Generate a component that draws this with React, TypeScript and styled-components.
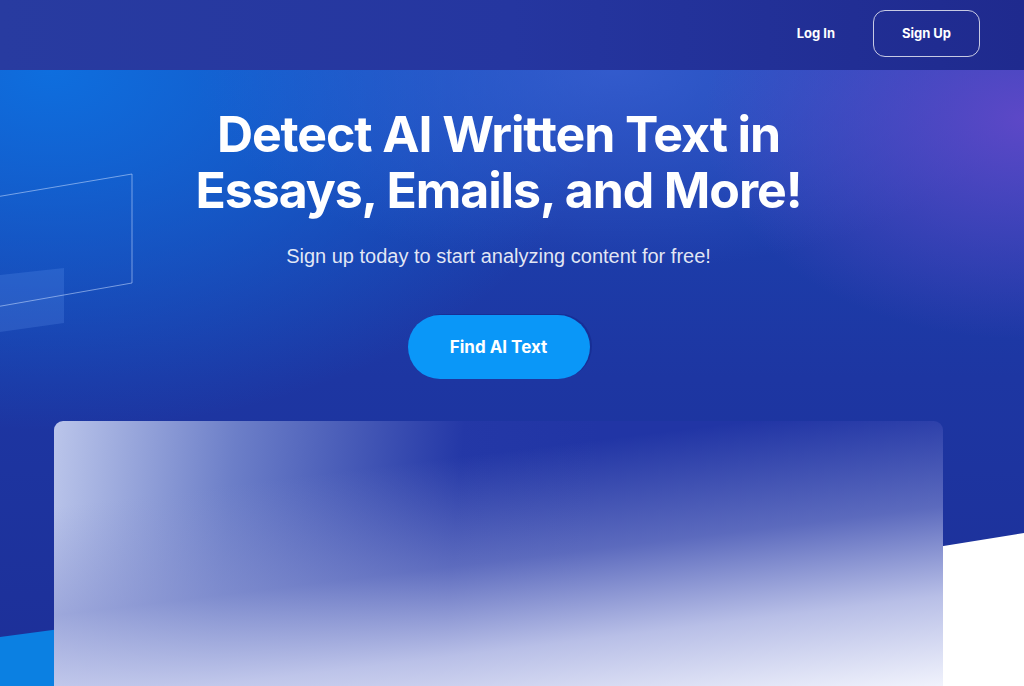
import React from "react";
import styled, { createGlobalStyle } from "styled-components";

const GlobalStyle = createGlobalStyle`
    html, body {
        margin: 0;
        padding: 0;
        background: #1e2a8e;
    }
    * {
        box-sizing: border-box;
    }
`;

const Page = styled.div`
    position: relative;
    width: 100%;
    height: 686px;
    overflow: hidden;
    font-family: "Inter", "Liberation Sans", sans-serif;
    color: #fff;
`;

const Header = styled.header`
    height: 70px;
    display: flex;
    align-items: center;
    justify-content: flex-end;
    gap: 38px;
    padding: 0 44px 4px 0;
    background: linear-gradient(90deg, #283ba0 0%, #2536a0 50%, #1f2a8e 100%);
`;

const NavLink = styled.a`
    cursor: pointer;
    color: #fff;
    font-size: 13px;
    font-weight: 700;
    text-decoration: none;
`;

const NavButton = styled.a`
    cursor: pointer;
    width: 107px;
    height: 47px;
    display: flex;
    align-items: center;
    justify-content: center;
    border: 1.5px solid rgba(255, 255, 255, 0.75);
    border-radius: 12px;
    color: #fff;
    font-size: 13px;
    font-weight: 700;
`;

const Hero = styled.section`
    position: relative;
    height: 616px;
    background:
        radial-gradient(ellipse 320px 220px at 100% 8%, rgba(96, 72, 200, 0.95) 0%, rgba(96, 72, 200, 0) 100%),
        radial-gradient(ellipse 420px 200px at 60% 0%, rgba(60, 100, 215, 0.7) 0%, rgba(60, 100, 215, 0) 100%),
        radial-gradient(ellipse 560px 360px at 5% 0%, rgba(14, 110, 222, 1) 0%, rgba(14, 110, 222, 0) 100%),
        linear-gradient(180deg, #1c45b3 0%, #1d36a2 50%, #1d2f98 100%);
`;

const Content = styled.div`
    position: relative;
    z-index: 2;
    width: 889px;
    margin-left: 54px;
    display: flex;
    flex-direction: column;
    align-items: center;
    padding-top: 36px;
`;

const Title = styled.h1`
    margin: 0;
    font-size: 50px;
    line-height: 56px;
    font-weight: 700;
    letter-spacing: -1.1px;
    text-align: center;
`;

const Subtitle = styled.p`
    margin: 27px 0 0;
    font-family: "Liberation Sans", Arial, sans-serif;
    font-size: 20px;
    color: rgba(255, 255, 255, 0.88);
`;

const Cta = styled.button`
    margin-top: 47px;
    width: 182px;
    height: 64px;
    border: none;
    border-radius: 32px;
    background: #0a97f8;
    box-shadow: 2px -1px 0 rgba(20, 40, 140, 0.6);
    color: #fff;
    font-family: "Inter", "Liberation Sans", sans-serif;
    font-size: 17px;
    font-weight: 700;
    cursor: pointer;
`;

const Preview = styled.div`
    margin-top: 42px;
    width: 889px;
    height: 280px;
    border-radius: 9px;
    background:
        linear-gradient(173deg, rgba(238, 240, 250, 0) 22%, rgba(140, 150, 210, 0.55) 50%, rgba(205, 210, 240, 0.88) 73%, rgba(240, 242, 252, 1) 96%),
        linear-gradient(95deg, rgba(195, 205, 238, 0.95) 0%, rgba(140, 158, 215, 0.7) 20%, rgba(60, 80, 180, 0.1) 45%, rgba(40, 60, 170, 0) 60%),
        #2135a5;
`;

const Decoration = styled.svg`
    position: absolute;
    top: 0;
    left: 0;
    z-index: 1;
    pointer-events: none;
`;

const App: React.FC = () => {
    return (
        <>
            <GlobalStyle />
            <Page>
                <Header>
                    <NavLink>Log In</NavLink>
                    <NavButton>Sign Up</NavButton>
                </Header>
                <Hero>
                    <Decoration width="1024" height="616" viewBox="0 70 1024 616">
                        <polygon points="0,275 64,268 64,323 0,332" fill="rgba(120,170,255,0.18)" />
                        <polygon
                            points="-10,198 132,174 132,283 -10,308"
                            fill="none"
                            stroke="rgba(200,220,255,0.55)"
                            strokeWidth="1"
                        />
                        <polygon points="0,637 60,629 60,700 0,700" fill="#0b80e2" />
                        <polygon points="900,553 1024,533 1024,700 900,700" fill="#ffffff" />
                    </Decoration>
                    <Content>
                        <Title>
                            Detect AI Written Text in
                            <br />
                            Essays, Emails, and More!
                        </Title>
                        <Subtitle>Sign up today to start analyzing content for free!</Subtitle>
                        <Cta>Find AI Text</Cta>
                        <Preview />
                    </Content>
                </Hero>
            </Page>
        </>
    );
};

export default App;
